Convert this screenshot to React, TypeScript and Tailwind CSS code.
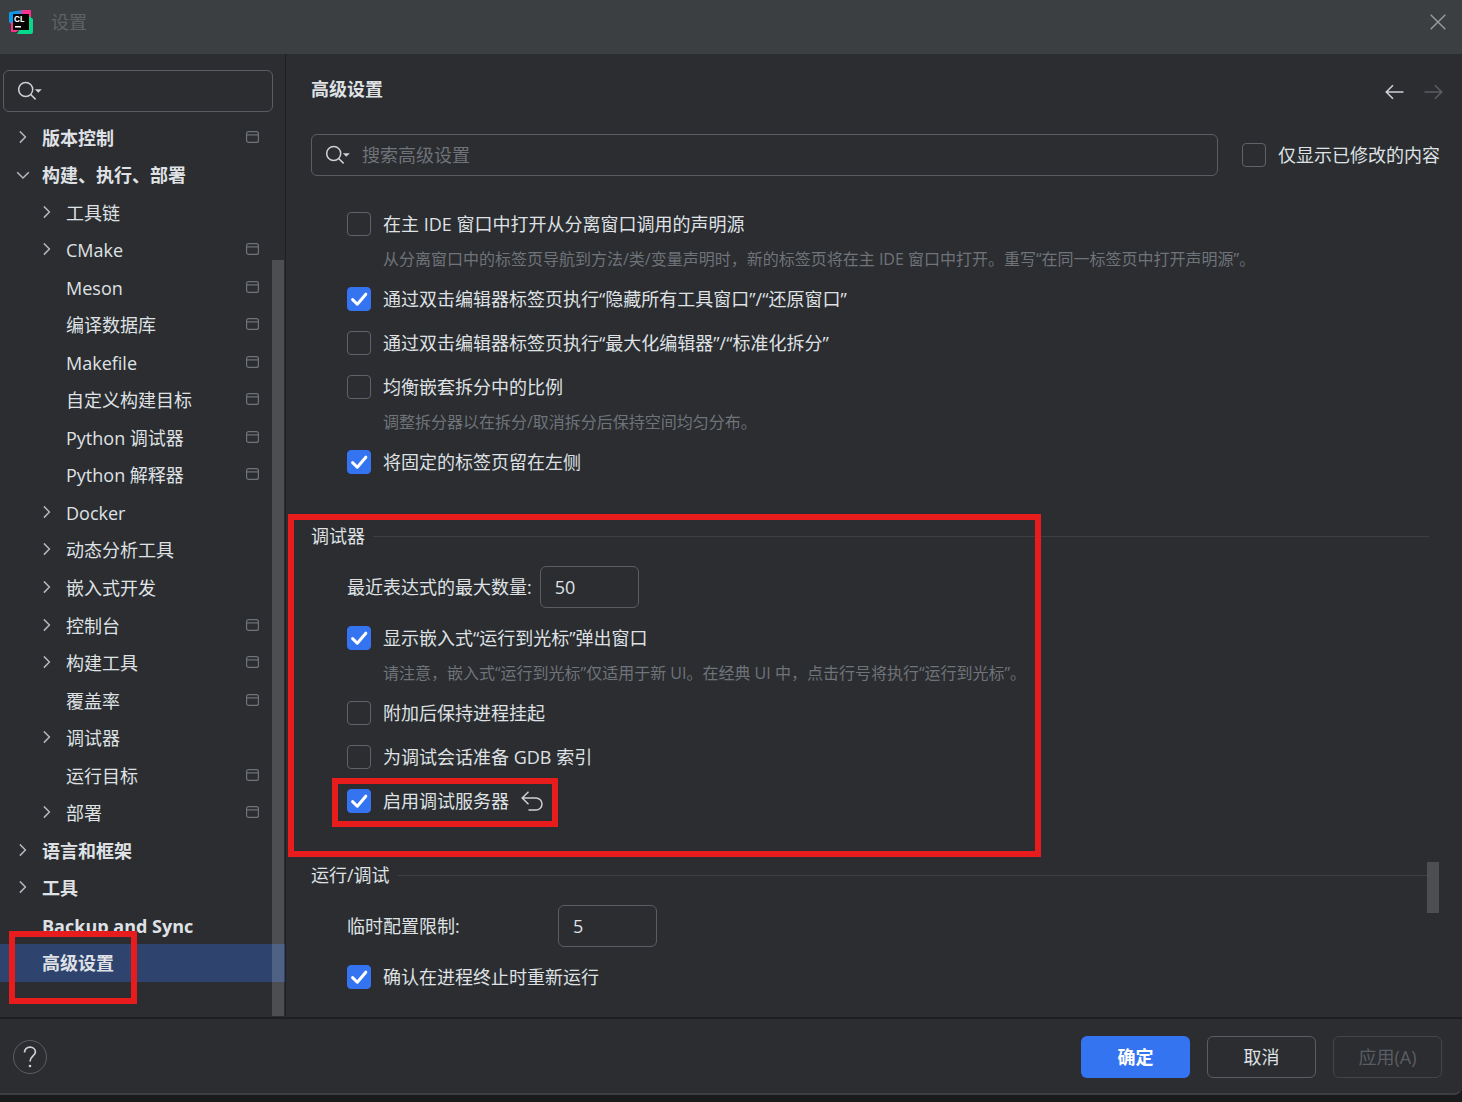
import { useState } from "react";

type TreeNode = {
  label: string;
  level: 0 | 1;
  arrow?: "right" | "down";
  project?: boolean;
};

const tree: TreeNode[] = [
  { label: "版本控制", level: 0, arrow: "right", project: true },
  { label: "构建、执行、部署", level: 0, arrow: "down" },
  { label: "工具链", level: 1, arrow: "right" },
  { label: "CMake", level: 1, arrow: "right", project: true },
  { label: "Meson", level: 1, project: true },
  { label: "编译数据库", level: 1, project: true },
  { label: "Makefile", level: 1, project: true },
  { label: "自定义构建目标", level: 1, project: true },
  { label: "Python 调试器", level: 1, project: true },
  { label: "Python 解释器", level: 1, project: true },
  { label: "Docker", level: 1, arrow: "right" },
  { label: "动态分析工具", level: 1, arrow: "right" },
  { label: "嵌入式开发", level: 1, arrow: "right" },
  { label: "控制台", level: 1, arrow: "right", project: true },
  { label: "构建工具", level: 1, arrow: "right", project: true },
  { label: "覆盖率", level: 1, project: true },
  { label: "调试器", level: 1, arrow: "right" },
  { label: "运行目标", level: 1, project: true },
  { label: "部署", level: 1, arrow: "right", project: true },
  { label: "语言和框架", level: 0, arrow: "right" },
  { label: "工具", level: 0, arrow: "right" },
  { label: "Backup and Sync", level: 0 },
  { label: "高级设置", level: 0 },
];

function Logo() {
  return (
    <svg width="26" height="26" viewBox="0 0 26 26" aria-hidden="true">
      <defs>
        <linearGradient id="logo-top" x1="0" y1="0" x2="1" y2="0">
          <stop offset="0.4" stopColor="#0b9bea" />
          <stop offset="0.7" stopColor="#ff318c" />
        </linearGradient>
      </defs>
      <path d="M1 4 Q1 3 2 3 L14 1 H22 Q23 1 23 2 V10 L12 14 L4 16 L1 13 Z" fill="url(#logo-top)" />
      <path d="M3 13 L12 14 L11 21 L8 23 H4 Q3 23 3 22 Z" fill="#ff318c" />
      <path d="M21 7 L25 10 V23 Q25 25 23 25 H9 L12 20 L20 19 Z" fill="#07d98a" />
      <rect x="5" y="5" width="16" height="16" fill="#000" />
      <text x="6" y="13" fontSize="8" fontWeight="700" fill="#fff" fontFamily="Inter, sans-serif">
        CL
      </text>
      <rect x="7" y="17" width="6" height="1.5" fill="#fff" />
    </svg>
  );
}

function SearchIcon() {
  return (
    <svg width="24" height="20" viewBox="0 0 24 20" fill="none" aria-hidden="true">
      <circle cx="7.7" cy="8.5" r="7" stroke="#ced0d6" strokeWidth="1.5" />
      <path d="M12.7 13.5 L17.6 18.4" stroke="#ced0d6" strokeWidth="1.5" />
      <path d="M16.8 8.3 H23.8 L20.3 11.8 Z" fill="#ced0d6" />
    </svg>
  );
}

function Chevron({ direction }: { direction: "right" | "down" }) {
  return (
    <svg width="14" height="14" viewBox="0 0 14 14" fill="none" stroke="#b4b8bf" strokeWidth="1.5" aria-hidden="true">
      <path d={direction === "right" ? "M3.9 0.4 L9.4 6 L3.9 11.6" : "M1.2 4.3 L7 10 L12.8 4.3"} />
    </svg>
  );
}

function ProjectIcon() {
  return (
    <svg width="13" height="14" viewBox="0 0 13 14" fill="none" stroke="#6f737a" strokeWidth="1.2" aria-hidden="true">
      <rect x="0.6" y="0.6" width="11.8" height="10.8" rx="2" />
      <path d="M0.6 3.9 H12.4" />
    </svg>
  );
}

function Checkbox({ label, checked = false }: { label: string; checked?: boolean }) {
  return (
    <label className="flex h-6 items-center gap-3 whitespace-nowrap">
      <span className="grid size-6 shrink-0">
        <input
          type="checkbox"
          defaultChecked={checked}
          className="peer col-start-1 row-start-1 size-6 appearance-none rounded border border-[#5f6268] checked:border-[#3574f0] checked:bg-[#3574f0]"
        />
        <svg
          viewBox="0 0 24 24"
          fill="none"
          className="pointer-events-none invisible col-start-1 row-start-1 size-6 peer-checked:visible"
          aria-hidden="true"
        >
          <path d="M5.6 12.6 L10.3 17.2 L18.8 7.2" stroke="#fff" strokeWidth="3" strokeLinecap="round" strokeLinejoin="round" />
        </svg>
      </span>
      <span>{label}</span>
    </label>
  );
}

function Option({ label, checked, hint }: { label: string; checked?: boolean; hint?: string }) {
  if (!hint) {
    return (
      <div className="pb-5">
        <Checkbox label={label} checked={checked} />
      </div>
    );
  }
  return (
    <div className="pb-[15px]">
      <Checkbox label={label} checked={checked} />
      <p className="mt-[11px] pl-9 text-base leading-[25px] whitespace-nowrap text-[#6f737a]">{hint}</p>
    </div>
  );
}

function SectionTitle({ children }: { children: string }) {
  return (
    <div className="flex h-6 items-center gap-2">
      <h2>{children}</h2>
      <div className="h-px flex-1 bg-[#3d3f43]" />
    </div>
  );
}

function NumberField({ id, label, value, wide }: { id: string; label: string; value: string; wide?: boolean }) {
  return (
    <div className="my-[18px] flex items-center gap-2">
      <label htmlFor={id} className={wide ? "w-[203px]" : ""}>
        {label}
      </label>
      <input
        id={id}
        defaultValue={value}
        className="h-[42px] w-[99px] rounded-md border border-[#5a5d63] bg-transparent px-[14px] outline-none"
      />
    </div>
  );
}

function Sidebar() {
  const [selected, setSelected] = useState("高级设置");

  return (
    <aside className="relative flex w-[286px] shrink-0 flex-col border-r border-[#1e1f22] pt-4 pb-[35px]">
      <label className="mr-3 ml-[3px] flex h-[42px] items-center rounded-md border border-[#5a5d63] pl-[14px]">
        <SearchIcon />
        <input type="search" aria-label="搜索" className="min-w-0 flex-1 bg-transparent px-3 outline-none" />
      </label>
      <ul className="mt-[7px] grid flex-1 auto-rows-fr">
        {tree.map((node) => {
          const active = node.label === selected;
          return (
            <li key={node.label} className="relative flex">
              <button
                onClick={() => setSelected(node.label)}
                className={`flex flex-1 items-center gap-[7px] pr-[26px] text-left ${
                  node.level === 0 ? "pl-[11px] font-bold" : "pl-[35px]"
                } ${active ? "bg-[#2e436e]" : ""}`}
              >
                <span className="flex w-6 justify-center">{node.arrow && <Chevron direction={node.arrow} />}</span>
                <span className="flex-1 whitespace-nowrap">{node.label}</span>
                {node.project && <ProjectIcon />}
              </button>
              {node.label === "高级设置" && (
                <div className="pointer-events-none absolute -top-[13px] left-[9px] h-[73px] w-[128px] border-[6px] border-[#e81c1c]" />
              )}
            </li>
          );
        })}
      </ul>
      <div className="absolute top-[206px] right-px bottom-px w-3 bg-white/16" />
    </aside>
  );
}

export default function App() {
  return (
    <div className="flex min-h-screen flex-col overflow-hidden bg-[#1a1b1d] pb-[7px] font-['Open_Sans','Noto_Sans_CJK_SC',sans-serif] text-lg leading-6 text-[#dfe1e5]">
      <div className="flex flex-1 flex-col rounded-br-lg border-b-2 border-[#3c3f41] bg-[#2b2d30]">
        <header className="flex h-[54px] items-center bg-[#3c3f41] pr-4 pb-[10px] pl-2">
          <Logo />
          <h1 className="ml-[17px] flex-1 text-[#5f6265]">设置</h1>
          <button aria-label="关闭">
            <svg width="16" height="16" viewBox="0 0 16 16" stroke="#9a9c9e" strokeWidth="1.4" aria-hidden="true">
              <path d="M0.7 0.7 L15.3 15.3 M15.3 0.7 L0.7 15.3" />
            </svg>
          </button>
        </header>

        <div className="flex flex-1">
          <Sidebar />

          <main className="relative flex-1 pt-[23px] pl-[25px]">
            <div className="flex h-6 items-center justify-between pr-[19px]">
              <h1 className="font-bold">高级设置</h1>
              <div className="flex gap-5 pt-[6px]">
                <button aria-label="后退">
                  <svg width="19" height="16" viewBox="0 0 19 16" fill="none" stroke="#ced0d6" strokeWidth="1.6" aria-hidden="true">
                    <path d="M18.5 8 H1.5 M8 1.3 L1.3 8 L8 14.7" />
                  </svg>
                </button>
                <button aria-label="前进" disabled>
                  <svg width="19" height="16" viewBox="0 0 19 16" fill="none" stroke="#5a5d63" strokeWidth="1.6" aria-hidden="true">
                    <path d="M0.5 8 H17.5 M11 1.3 L17.7 8 L11 14.7" />
                  </svg>
                </button>
              </div>
            </div>

            <div className="mt-[33px] flex items-center gap-6 pr-[22px]">
              <label className="flex h-[42px] flex-1 items-center gap-3 rounded-md border border-[#5a5d63] pl-[14px]">
                <SearchIcon />
                <input
                  type="search"
                  aria-label="搜索高级设置"
                  placeholder="搜索高级设置"
                  className="min-w-0 flex-1 bg-transparent outline-none placeholder:text-[#6f737a]"
                />
              </label>
              <Checkbox label="仅显示已修改的内容" />
            </div>

            <div className="mt-9 pr-[33px]">
              <section className="mb-[30px] pl-9">
                <Option
                  label="在主 IDE 窗口中打开从分离窗口调用的声明源"
                  hint="从分离窗口中的标签页导航到方法/类/变量声明时，新的标签页将在主 IDE 窗口中打开。重写“在同一标签页中打开声明源”。"
                />
                <Option label="通过双击编辑器标签页执行“隐藏所有工具窗口”/“还原窗口”" checked />
                <Option label="通过双击编辑器标签页执行“最大化编辑器”/“标准化拆分”" />
                <Option label="均衡嵌套拆分中的比例" hint="调整拆分器以在拆分/取消拆分后保持空间均匀分布。" />
                <Option label="将固定的标签页留在左侧" checked />
              </section>

              <section className="relative mb-[50px]">
                <SectionTitle>调试器</SectionTitle>
                <div className="pl-9">
                  <NumberField id="expressions" label="最近表达式的最大数量:" value="50" />
                  <Option
                    label="显示嵌入式“运行到光标”弹出窗口"
                    checked
                    hint="请注意，嵌入式“运行到光标”仅适用于新 UI。在经典 UI 中，点击行号将执行“运行到光标”。"
                  />
                  <Option label="附加后保持进程挂起" />
                  <Option label="为调试会话准备 GDB 索引" />
                  <div className="relative flex items-center gap-3">
                    <Checkbox label="启用调试服务器" checked />
                    <button aria-label="还原">
                      <svg width="22" height="20" viewBox="0 0 22 20" fill="none" stroke="#ced0d6" strokeWidth="1.5" aria-hidden="true">
                        <path d="M7.5 0.8 L1.2 7 L7.5 13.2 M1.2 7 H15 A6 6 0 0 1 15 19 H7.5" />
                      </svg>
                    </button>
                    <div className="pointer-events-none absolute -top-[11px] -left-[15px] h-[49px] w-[226px] border-[6px] border-[#e81c1c]" />
                  </div>
                </div>
                <div className="pointer-events-none absolute -top-[10px] -bottom-[44px] -left-[23px] w-[753px] border-[6px] border-[#e81c1c]" />
              </section>

              <section>
                <SectionTitle>运行/调试</SectionTitle>
                <div className="pl-9">
                  <NumberField id="temporary" label="临时配置限制:" value="5" wide />
                  <Checkbox label="确认在进程终止时重新运行" checked />
                </div>
              </section>
            </div>

            <div className="absolute right-[23px] bottom-[104px] h-[51px] w-3 bg-white/16" />
          </main>
        </div>

        <footer className="flex items-center gap-[17px] border-t-2 border-[#1e1f22] pt-[17px] pr-5 pb-[15px] pl-[13px]">
          <button
            aria-label="帮助"
            className="mr-auto flex size-[34px] items-center justify-center rounded-full border border-[#5a5d63]"
          >
            <svg width="14" height="22" viewBox="0 0 14 22" fill="none" aria-hidden="true">
              <path
                d="M1.5 6.5 C1.5 3.2 3.8 1.2 7 1.2 C10.2 1.2 12.4 3.2 12.4 6 C12.4 10 7 10 7 15.5"
                stroke="#ced0d6"
                strokeWidth="1.7"
              />
              <circle cx="7" cy="20" r="1.3" fill="#ced0d6" />
            </svg>
          </button>
          <button className="h-[42px] w-[109px] rounded-md bg-[#3574f0] font-bold text-white">确定</button>
          <button className="h-[42px] w-[109px] rounded-md border border-[#5a5d63]">取消</button>
          <button disabled className="h-[42px] w-[109px] rounded-md border border-[#43454a] text-[#5a5d63]">
            应用(A)
          </button>
        </footer>
      </div>
    </div>
  );
}
